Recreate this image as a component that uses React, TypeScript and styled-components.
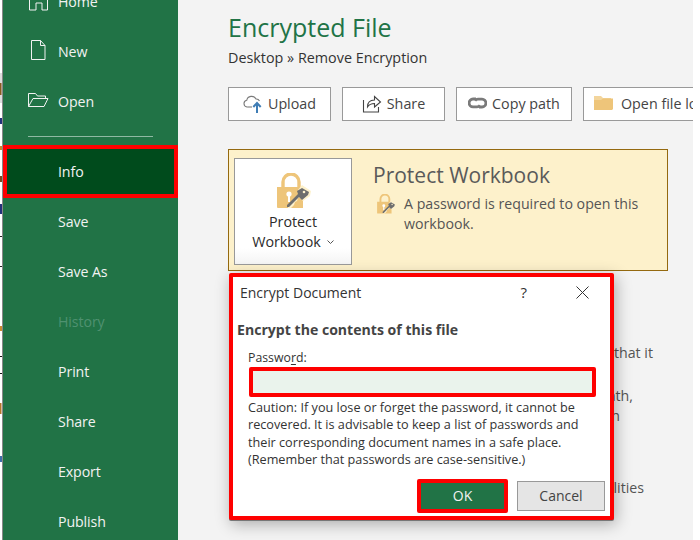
import styled, { createGlobalStyle } from 'styled-components';

const GlobalStyle = createGlobalStyle`
  html, body {
    margin: 0;
    padding: 0;
    background: #fff;
  }
  #root {
    width: 700px;
    height: 540px;
    overflow: hidden;
  }
`;

const FONT = `"Open Sans", "Noto Sans", "Liberation Sans", sans-serif`;

const Page = styled.div`
  position: relative;
  display: flex;
  width: 693px;
  height: 540px;
  overflow: hidden;
  background: #f3f3f3;
  font-family: ${FONT};
  color: #333;
`;

const Strip = styled.svg`
  flex: 0 0 3px;
  width: 3px;
  height: 540px;
  display: block;
`;

const Sidebar = styled.nav`
  flex: 0 0 175px;
  height: 540px;
  background: #217346;
  color: #f2f2f2;
  font-size: 14.2px;
  letter-spacing: -0.1px;
`;

const MenuList = styled.div`
  display: flex;
  flex-direction: column;
  margin-top: -24px;
`;

const MenuItem = styled.div<{ $disabled?: boolean; $icon?: boolean }>`
  display: flex;
  align-items: center;
  box-sizing: border-box;
  height: 50px;
  padding-left: ${(p) => (p.$icon ? '25px' : '55px')};
  color: ${(p) => (p.$disabled ? '#4f9170' : '#f2f2f2')};
`;

const ActiveItem = styled.div`
  display: flex;
  align-items: center;
  box-sizing: border-box;
  height: 53px;
  margin: -2px 0 -2px;
  padding-left: 51px;
  color: #f2f2f2;
  background: #004b1c;
  border: 4px solid #fe0000;
`;

const MenuIcon = styled.svg`
  flex: 0 0 22px;
  width: 22px;
  height: 22px;
  margin: -2px 8px 0 0;
  overflow: visible;
  fill: none;
  stroke: #f2f2f2;
  stroke-width: 1;
`;

const Divider = styled.div`
  height: 1px;
  margin: 10px 25px 10px 25px;
  background: #8fb9a3;
`;

const Main = styled.main`
  flex: 1;
  min-width: 0;
  padding-left: 50px;
`;

const Title = styled.h1`
  margin: 9px 0 0;
  font-size: 25px;
  line-height: 36px;
  font-weight: 400;
  color: #217346;
`;

const Breadcrumb = styled.div`
  margin-top: 3px;
  font-size: 14.35px;
  line-height: 20px;
  color: #333;
`;

const Toolbar = styled.div`
  display: flex;
  gap: 11px;
  margin-top: 19px;
`;

const ToolButton = styled.div<{ $w: number }>`
  flex: 0 0 ${(p) => p.$w}px;
  display: flex;
  align-items: center;
  justify-content: center;
  gap: 5px;
  box-sizing: border-box;
  height: 34px;
  padding-bottom: 2px;
  border: 1px solid #999;
  background: #fff;
  font-size: 14.3px;
  color: #444;
  white-space: nowrap;

  svg {
    flex-shrink: 0;
  }
`;

const OpenButton = styled(ToolButton)`
  justify-content: flex-start;
  padding-left: 10px;
  gap: 8px;
`;

const Panel = styled.section`
  display: flex;
  box-sizing: border-box;
  width: 440px;
  height: 122px;
  margin-top: 28px;
  padding: 8px 5px;
  background: #fdf1cb;
  border: 1px solid #94690f;
`;

const ProtectButton = styled.div`
  flex: 0 0 118px;
  display: flex;
  flex-direction: column;
  align-items: center;
  box-sizing: border-box;
  height: 107px;
  padding-top: 14px;
  border: 1px solid #999;
  background: linear-gradient(#fff 85%, #f4f4f4);
  font-size: 14.3px;
  line-height: 20px;
  color: #2b2b2b;
  text-align: center;
`;

const ButtonLabel = styled.div`
  margin-top: 3px;
`;

const Caret = styled.svg`
  width: 7px;
  height: 4px;
  margin-left: 6px;
  vertical-align: 3px;
`;

const PanelBody = styled.div`
  margin-left: 21px;
  min-width: 0;
`;

const PanelTitle = styled.h2`
  margin: 2px 0 0;
  font-size: 21px;
  line-height: 30px;
  font-weight: 400;
  color: #5a5a5a;
`;

const PanelNote = styled.div`
  display: flex;
  gap: 8px;
  margin-top: 4px;
  padding-left: 3px;
  font-size: 14.2px;
  line-height: 20px;
  color: #555;
`;

const NoteText = styled.div`
  width: 250px;
`;

const Behind = styled.div`
  display: flex;
  flex-direction: column;
  width: 440px;
  margin-top: 72px;
  font-size: 14.2px;
  line-height: 20px;
  color: #555;
  white-space: nowrap;
`;

const BehindLine = styled.div<{ $end: number; $gap?: number }>`
  align-self: flex-end;
  margin-right: ${(p) => 668 - p.$end}px;
  margin-top: ${(p) => p.$gap ?? 0}px;
`;

const Dialog = styled.div`
  position: absolute;
  left: 229px;
  top: 273px;
  box-sizing: border-box;
  width: 385px;
  height: 247px;
  padding: 0 4px;
  background: #fff;
  border: 4px solid #fe0000;
  border-radius: 2px;
  box-shadow: 0 1px 0 #777, 2px 4px 16px rgba(0, 0, 0, 0.3);
`;

const DialogHeader = styled.div`
  display: flex;
  align-items: center;
  height: 30px;
  padding-left: 3px;
  font-size: 14px;
  color: #333;
`;

const HeaderTitle = styled.span`
  flex: 1;
`;

const HelpMark = styled.span`
  font-size: 15px;
  margin-right: 49px;
`;

const CloseIcon = styled.svg`
  width: 13px;
  height: 13px;
  margin-right: 17px;
  stroke: #333;
  stroke-width: 1;
`;

const DialogHeading = styled.h3`
  margin: 14px 0 0;
  font-size: 14.1px;
  line-height: 18px;
  font-weight: 700;
  color: #444;
`;

const FieldBlock = styled.div`
  padding-left: 11px;
`;

const FieldLabel = styled.label`
  display: block;
  margin-top: 10px;
  font-size: 12.3px;
  line-height: 18px;
  color: #333;

  u {
    text-underline-offset: 2px;
  }
`;

const PasswordBox = styled.div`
  box-sizing: border-box;
  width: 347px;
  height: 30px;
  margin: 0 0 0 1px;
  background: #eaf3ec;
  border: 4px solid #fe0000;
  border-radius: 2px;
`;

const Caution = styled.p`
  margin: 2px 0 0;
  font-size: 12.66px;
  line-height: 17.4px;
  color: #333;
  white-space: nowrap;
`;

const DialogActions = styled.div`
  display: flex;
  align-items: center;
  justify-content: flex-end;
  gap: 9px;
  margin: 10px 1px 0 0;
`;

const OkButton = styled.div`
  display: flex;
  align-items: center;
  justify-content: center;
  box-sizing: border-box;
  width: 91px;
  height: 34px;
  background: #217346;
  border: 4px solid #fe0000;
  border-radius: 2px;
  color: #f2f2f2;
  font-size: 14px;
`;

const CancelButton = styled.div`
  display: flex;
  align-items: center;
  justify-content: center;
  box-sizing: border-box;
  width: 88px;
  height: 30px;
  background: #e5e5e5;
  border: 1px solid #999;
  color: #444;
  font-size: 14px;
`;

const LockKeyIcon = ({ size }: { size: number }) => (
  <svg width={size} height={size} viewBox="0 0 36 36">
    <path d="M8 15V9a8 8 0 0 1 16 0v6" fill="none" stroke="#eec57a" strokeWidth="3.4" />
    <path d="M2 14h26v21H3a1 1 0 0 1-1-1z" fill="#eec57a" />
    <circle cx="14" cy="21" r="2.6" fill="#fff" />
    <rect x="13" y="22" width="2" height="7" fill="#fff" />
    <path d="M27 12l9 6-1 5-7 5-4-4-1 1-1 3-2 1-1 3-3 3h-3l0-3 11-11-1-4z" fill="#fdf1cb" />
    <path d="M27 15l7 4-1 3-6 5-3-3-10 10h-2l0-2 11-11-1-3z" fill="#6e6e6e" />
    <circle cx="29" cy="19" r="1.3" fill="#fdf1cb" />
  </svg>
);

const UploadIcon = () => (
  <svg width="20" height="20" viewBox="0 0 20 20" fill="none">
    <path d="M5 14H4a3.4 3.4 0 0 1-.3-6.7A5 5 0 0 1 13 6a3.6 3.6 0 0 1 3.500 2" stroke="#7a7a7a" strokeWidth="1.1" />
    <path d="M5 14h4" stroke="#7a7a7a" strokeWidth="1.1" />
    <path d="M14 20v-9M10.300 14l3.700-4 3.700 4" stroke="#3f7db5" strokeWidth="2" />
  </svg>
);

const ShareIcon = () => (
  <svg width="20" height="20" viewBox="0 0 20 20" fill="none" stroke="#444" strokeWidth="1.1">
    <path d="M1.500 7v12h15v-5" />
    <path d="M5.500 14c0-5 3-7 7-7V3.500l6 5.500-6 5v-3.500c-3 0-5 .5-7 3.500z" />
  </svg>
);

const LinkIcon = () => (
  <svg width="19" height="12" viewBox="0 0 19 12" fill="none" stroke="#7a7a7a" strokeWidth="2.800">
    <path d="M8 2H5a3.800 3.800 0 0 0 0 7.800h4a3.800 3.800 0 0 0 3-1.500" />
    <path d="M11 10h3a3.800 3.800 0 0 0 0-7.800h-4a3.800 3.800 0 0 0-3 1.500" />
  </svg>
);

const FolderIcon = () => (
  <svg width="19" height="16" viewBox="0 0 19 16">
    <path d="M0 1h7l2 2h8v3H0z" fill="#f3d59c" />
    <path d="M0 15V5h7l2-1.500h10V14l-1 1z" fill="#eec57a" />
  </svg>
);

const iconMenu = [
  { label: 'Home', d: 'M1.500 21V9M1.500 21H8v-7h6v7h5.500V9M1.500 9L11-1l9.500 10' },
  { label: 'New', d: 'M3.500 1.500h9l4.500 5v14H3.500zM12.500 1.500v5H17' },
  { label: 'Open', d: 'M.5 17.500V4.500h7l2 2.500h8v3M.5 17.500l4.500-8h15l-4 8z' },
];

const plainMenu = ['Save', 'Save As', 'History', 'Print', 'Share', 'Export', 'Publish'];

export default function App() {
  return (
    <Page>
      <GlobalStyle />
      <Strip viewBox="0 0 3 540">
        <rect width="3" height="540" fill="#fff" />
        <rect width="2" y="73" height="30" fill="#dcdcdc" />
        <rect y="83" width="1.500" height="12" fill="#8a5a20" />
        <rect y="118" width="2" height="6" fill="#24327a" />
        <rect y="146" width="2" height="4" fill="#c98a30" />
        <rect y="176" width="2" height="6" fill="#7a4a20" />
        <rect y="204" width="2" height="10" fill="#24327a" />
        <rect y="236" width="2" height="1" fill="#222" />
        <rect y="266" width="2" height="1" fill="#222" />
        <rect y="326" width="2" height="5" fill="#c98a30" />
        <rect y="356" width="2" height="1" fill="#111" />
        <rect y="373" width="2" height="1" fill="#111" />
        <rect y="403" width="1.500" height="11" fill="#b5752a" />
        <rect y="456" width="2" height="6" fill="#3f6ea8" />
        <rect x="2" width="1" height="540" fill="#888" />
      </Strip>

      <Sidebar>
        <MenuList>
          {iconMenu.map((item) => (
            <MenuItem key={item.label} $icon>
              <MenuIcon viewBox="0 0 22 22">
                <path d={item.d} />
              </MenuIcon>
              {item.label}
            </MenuItem>
          ))}
          <Divider />
          <ActiveItem>Info</ActiveItem>
          {plainMenu.map((label) => (
            <MenuItem key={label} $disabled={label === 'History'}>
              {label}
            </MenuItem>
          ))}
        </MenuList>
      </Sidebar>

      <Main>
        <Title>Encrypted File</Title>
        <Breadcrumb>Desktop » Remove Encryption</Breadcrumb>
        <Toolbar>
          <ToolButton $w={103}>
            <UploadIcon />
            Upload
          </ToolButton>
          <ToolButton $w={103}>
            <ShareIcon />
            Share
          </ToolButton>
          <ToolButton $w={116}>
            <LinkIcon />
            Copy path
          </ToolButton>
          <OpenButton $w={170}>
            <FolderIcon />
            Open file location
          </OpenButton>
        </Toolbar>

        <Panel>
          <ProtectButton>
            <LockKeyIcon size={36} />
            <ButtonLabel>
              Protect
              <br />
              Workbook
              <Caret viewBox="0 0 7 4" fill="none" stroke="#555">
                <path d="M.5.500l3 3 3-3" />
              </Caret>
            </ButtonLabel>
          </ProtectButton>
          <PanelBody>
            <PanelTitle>Protect Workbook</PanelTitle>
            <PanelNote>
              <LockKeyIcon size={20} />
              <NoteText>A password is required to open this workbook.</NoteText>
            </PanelNote>
          </PanelBody>
        </Panel>

        <Behind>
          <BehindLine $end={653}>that it</BehindLine>
          <BehindLine $end={633} $gap={23}>ath,</BehindLine>
          <BehindLine $end={620}>h</BehindLine>
          <BehindLine $end={644} $gap={52}>lities</BehindLine>
        </Behind>
      </Main>

      <Dialog>
        <DialogHeader>
          <HeaderTitle>Encrypt Document</HeaderTitle>
          <HelpMark>?</HelpMark>
          <CloseIcon viewBox="0 0 13 13">
            <path d="M.5.500l12 12M12.500.500l-12 12" />
          </CloseIcon>
        </DialogHeader>
        <DialogHeading>Encrypt the contents of this file</DialogHeading>
        <FieldBlock>
          <FieldLabel>
            Passwo<u>r</u>d:
          </FieldLabel>
          <PasswordBox />
          <Caution>
            Caution: If you lose or forget the password, it cannot be
            <br />
            recovered. It is advisable to keep a list of passwords and
            <br />
            their corresponding document names in a safe place.
            <br />
            (Remember that passwords are case-sensitive.)
          </Caution>
        </FieldBlock>
        <DialogActions>
          <OkButton>OK</OkButton>
          <CancelButton>Cancel</CancelButton>
        </DialogActions>
      </Dialog>
    </Page>
  );
}
